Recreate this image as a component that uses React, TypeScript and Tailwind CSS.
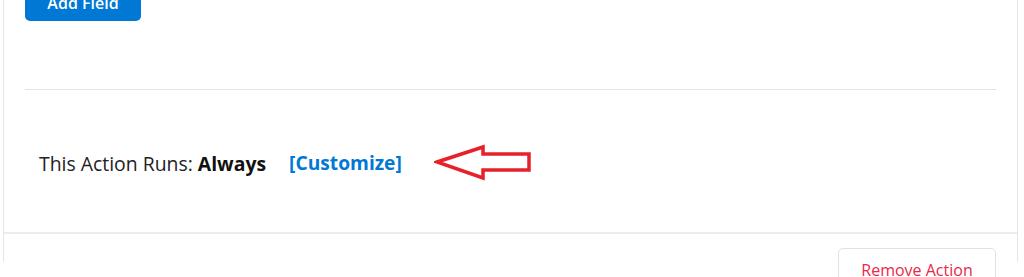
import React from "react";

const font = { fontFamily: '"Open Sans", "Noto Sans", sans-serif' };

function PointerArrow() {
	return (
		<svg width="100" height="38" viewBox="0 0 100 38" className="block shrink-0">
			<polygon
				points="3,18 49,3 49,10 95,10 95,26 49,26 49,34"
				fill="none"
				stroke="#e8202a"
				strokeWidth="3.5"
				strokeLinejoin="miter"
			/>
		</svg>
	);
}

export default function App() {
	return (
		<div className="h-[277px] w-[1024px] overflow-hidden bg-white" style={font}>
			<div className="ml-[3px] w-[1015px] h-full border-x border-[#e6e6e6]">
				{/* fields section */}
				<div className="px-[21px]">
					<button className="-mt-[15px] block h-[36px] w-[116px] rounded-[5px] bg-[#0078d4] text-[16px] font-semibold text-white">
						Add Field
					</button>
					<div className="mt-[68px] h-px bg-[#e3e3e3]" />
				</div>

				{/* condition row */}
				<div className="flex h-[142px] items-center pl-[35px] pt-[5px]">
					<span className="text-[19.4px] text-[#222]">
						This Action Runs: <span className="font-bold text-[#111]">Always</span>
					</span>
					<a className="ml-[23px] text-[19.2px] font-bold text-[#0078d4]">[Customize]</a>
					<span className="ml-[32px] -mt-[2px]">
						<PointerArrow />
					</span>
				</div>

				{/* footer */}
				<div className="border-t-2 border-[#ececec] px-[21px] pt-[14px]">
					<div className="flex justify-end">
						<button className="h-[40px] w-[158px] rounded-[5px] border border-[#e2e2e2] bg-white pt-[4px] text-[16px] text-[#e8294a]">
							Remove Action
						</button>
					</div>
				</div>
			</div>
		</div>
	);
}
